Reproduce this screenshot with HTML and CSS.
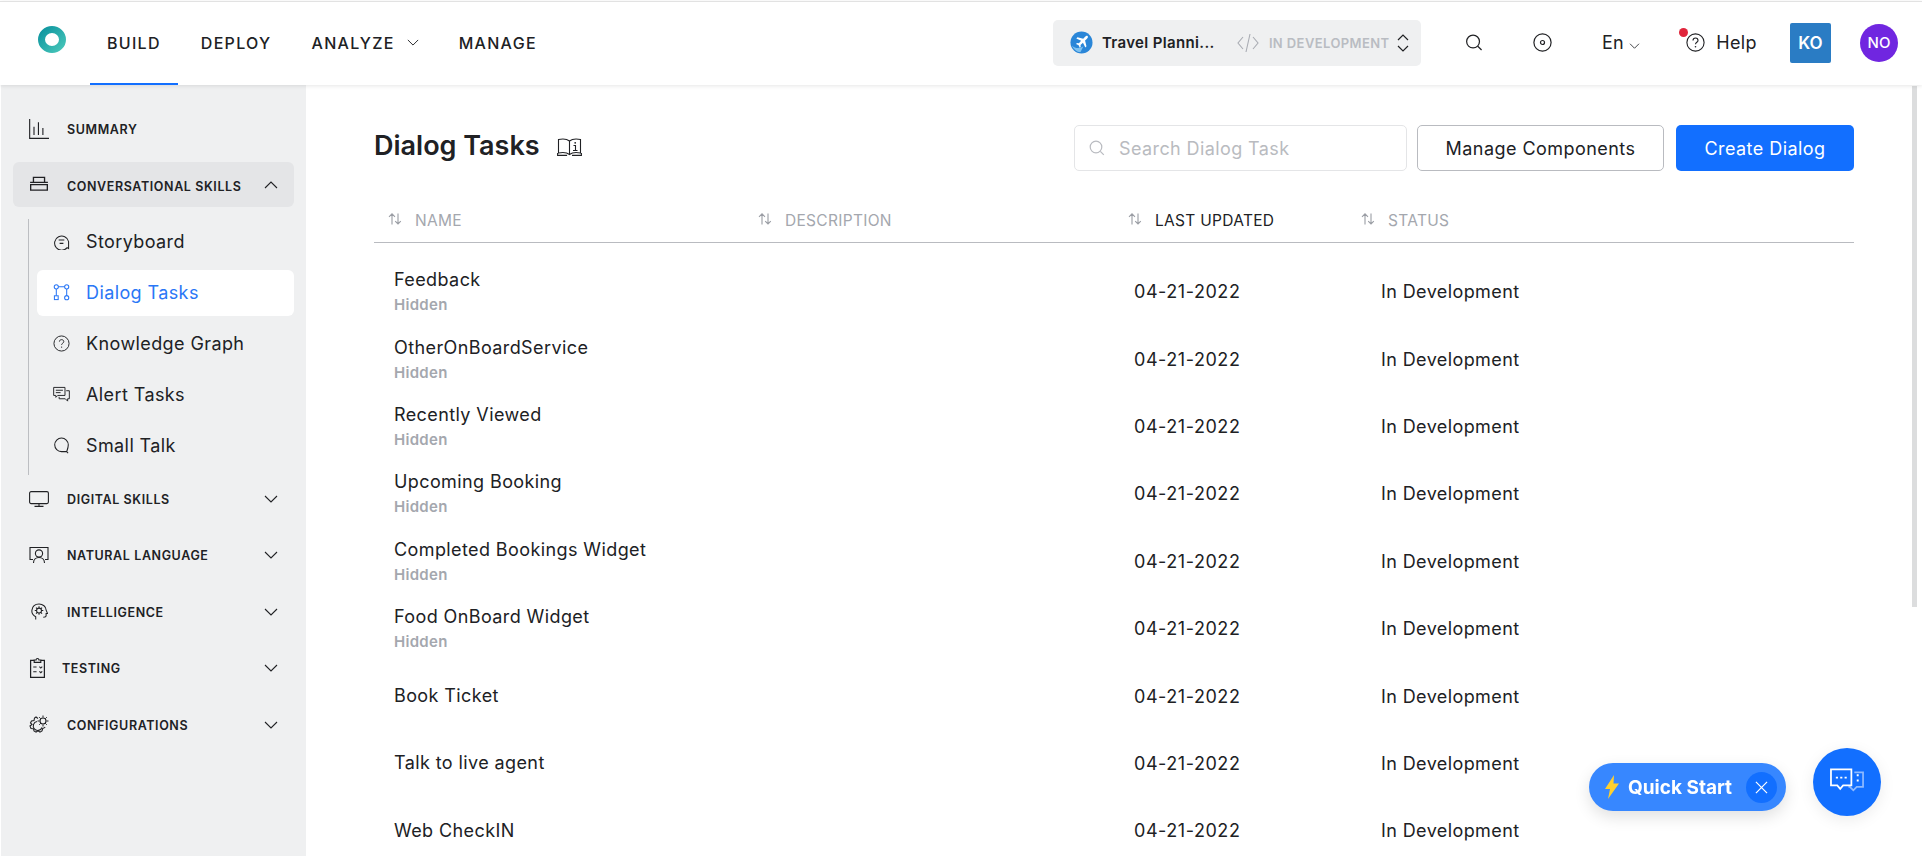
FILE: index.html
```html
<!DOCTYPE html>
<html lang="en">
<head>
    <meta charset="UTF-8">
    <meta name="viewport" content="width=device-width, initial-scale=1.0">
    <title>Dialog Tasks</title>
    <link rel="stylesheet" href="styles.css">
</head>
<body>
    <svg class="defs" aria-hidden="true">
        <symbol id="chev" viewBox="0 0 14 8"><path d="M1 1l6 6 6-6" fill="none" stroke="currentColor" stroke-width="1.1"/></symbol>
        <symbol id="sort" viewBox="0 0 14 12"><path d="M4 11.500V1M1 3.800L4 .8l3 3M10 .5V11M7.200 8.200l2.800 2.800 2.800-2.800" fill="none" stroke="currentColor" stroke-width="1.100"/></symbol>
    </svg>

    <header class="topbar">
        <svg class="logo" viewBox="0 0 28 27">
            <defs><linearGradient id="ring" x1="0" y1="0" x2="1" y2="1"><stop offset="0" stop-color="#0f96a0"/><stop offset="1" stop-color="#45c4b8"/></linearGradient></defs>
            <ellipse cx="14" cy="13.500" rx="10.500" ry="10" fill="none" stroke="url(#ring)" stroke-width="7"/>
        </svg>
        <nav class="nav">
            <a class="nav-item active">BUILD</a>
            <a class="nav-item">DEPLOY</a>
            <a class="nav-item">ANALYZE <svg class="nav-chev"><use href="#chev"/></svg></a>
            <a class="nav-item">MANAGE</a>
        </nav>
        <div class="top-right">
            <div class="app-chip">
                <svg class="app-globe" viewBox="0 0 24 24">
                    <circle cx="12" cy="12" r="11.500" fill="#2a86d8"/>
                    <path d="M2 15c4 4 9 3 12 1l-3 6c-4 0-7-3-9-7z" fill="#7fc2f0"/>
                    <path d="M18.500 5.500c.8.800-.2 2-1 2.800l-1.800 1.700 1.500 6-1.200 1.200-2.500-5-2.500 2.300.2 2-1 1-1.200-2.700-2.700-1.200 1-1 2 .2 2.300-2.500-5-2.500 1.200-1.200 6 1.500 1.700-1.800c.8-.8 2-1.800 2.800-1z" fill="#fff"/>
                </svg>
                <span class="app-name">Travel Planni...</span>
                <svg class="app-code" viewBox="0 0 22 20"><path d="M6 4L1 10l5 6M16 4l5 6-5 6M13 1L9 19" fill="none" stroke="currentColor" stroke-width="1.100"/></svg>
                <span class="app-status">IN DEVELOPMENT</span>
                <svg class="app-updown" viewBox="0 0 12 18"><path d="M1 6l5-5 5 5M1 12l5 5 5-5" fill="none" stroke="#202124" stroke-width="1.200"/></svg>
            </div>
            <svg class="top-search" viewBox="0 0 18 18"><circle cx="8" cy="8" r="6.800" fill="none" stroke="currentColor" stroke-width="1.300"/><path d="M13 13l4 4" stroke="currentColor" stroke-width="1.300"/></svg>
            <svg class="top-target" viewBox="0 0 19 19"><circle cx="9.500" cy="9.500" r="8.600" fill="none" stroke="currentColor" stroke-width="1.200"/><circle cx="9.500" cy="9.500" r="2" fill="none" stroke="currentColor" stroke-width="1.200"/></svg>
            <span class="top-lang">En <svg class="lang-chev"><use href="#chev"/></svg></span>
            <span class="top-help">
                <i class="help-dot"></i>
                <svg class="help-icon" viewBox="0 0 19 19"><circle cx="9.500" cy="9.500" r="8.600" fill="none" stroke="currentColor" stroke-width="1.100"/><path d="M7 7.400c0-3.200 5-3.200 5 0 0 1.900-2.500 1.900-2.500 3.900" fill="none" stroke="currentColor" stroke-width="1.100"/><circle cx="9.500" cy="13.800" r=".8" fill="currentColor"/></svg>
                Help
            </span>
            <span class="badge-ko">KO</span>
            <span class="badge-no">NO</span>
        </div>
    </header>

    <div class="page">
        <aside class="sidebar">
            <a class="side-group first">
                <svg class="side-icon" viewBox="0 0 18 18"><path d="M.6 0v17.400H18M4.500 7v7.500M8.500 3v11.500M12.500 8v6.500" fill="none" stroke="currentColor" stroke-width="1"/></svg>
                <span class="side-label">SUMMARY</span>
            </a>
            <a class="side-group open">
                <svg class="side-icon" viewBox="0 0 18 14"><path d="M4 5V1h10v4M1.500 7.500h15v5h-15zM1 5.500h16" fill="none" stroke="currentColor" stroke-width="1.200"/></svg>
                <span class="side-label">CONVERSATIONAL SKILLS</span>
                <svg class="side-chev up"><use href="#chev"/></svg>
            </a>
            <div class="side-sub">
                <a class="sub-item">
                    <svg class="sub-icon" viewBox="0 0 18 18"><path d="M15 15.500A7.500 7.500 0 1 1 16.500 9v7.500z" fill="none" stroke="currentColor" stroke-width="1.100"/><path d="M6 7.500h6M7 11h4" stroke="currentColor" stroke-width="1.100"/></svg>
                    Storyboard
                </a>
                <a class="sub-item active">
                    <svg class="sub-icon" viewBox="0 0 18 18"><circle cx="3.500" cy="3" r="2.200" fill="none" stroke="currentColor" stroke-width="1.100"/><circle cx="14.500" cy="3" r="2.200" fill="none" stroke="currentColor" stroke-width="1.100"/><circle cx="14.500" cy="14.500" r="2.200" fill="none" stroke="currentColor" stroke-width="1.100"/><rect x="1.500" y="12.500" width="4" height="4" fill="none" stroke="currentColor" stroke-width="1.100"/><path d="M5.700 3h6.600M14.500 5.200v7M3.500 5.200v7.300" stroke="currentColor" stroke-width="1.100"/></svg>
                    Dialog Tasks
                </a>
                <a class="sub-item">
                    <svg class="sub-icon" viewBox="0 0 18 18"><circle cx="9" cy="9" r="8" fill="none" stroke="currentColor" stroke-width="1"/><path d="M6.800 7c0-2.800 4.600-2.800 4.600 0 0 1.700-2.300 1.700-2.300 3.400" fill="none" stroke="currentColor" stroke-width="1"/><circle cx="9.100" cy="12.800" r=".7" fill="currentColor"/></svg>
                    Knowledge Graph
                </a>
                <a class="sub-item">
                    <svg class="sub-icon" viewBox="0 0 18 18"><path d="M.7 1.500h12v8.500H5L3 12v-2H.7zM3 4.500h7.500M3 7h5" fill="none" stroke="currentColor" stroke-width="1"/><path d="M14 5h3.300v8.500h-1.800v2.500l-2.500-2.500H6.500v-2" fill="none" stroke="currentColor" stroke-width="1"/></svg>
                    Alert Tasks
                </a>
                <a class="sub-item">
                    <svg class="sub-icon" viewBox="0 0 18 18"><path d="M14.500 15.500H9A7.200 7.200 0 1 1 16.200 8.300c0 3-1 5.200-1.700 7.200zM14.500 15.500l1.500 1.500" fill="none" stroke="currentColor" stroke-width="1.100"/></svg>
                    Small Talk
                </a>
            </div>
            <a class="side-group">
                <svg class="side-icon" viewBox="0 0 20 16"><rect x=".6" y=".6" width="18.800" height="12" rx="1.500" fill="none" stroke="currentColor" stroke-width="1.100"/><path d="M10 13v2M5.500 15.400h9" stroke="currentColor" stroke-width="1.100"/></svg>
                <span class="side-label">DIGITAL SKILLS</span>
                <svg class="side-chev"><use href="#chev"/></svg>
            </a>
            <a class="side-group">
                <svg class="side-icon" viewBox="0 0 20 17"><path d="M4 13H1V1h18v12h-3" fill="none" stroke="currentColor" stroke-width="1.100"/><circle cx="10" cy="7" r="3.600" fill="none" stroke="currentColor" stroke-width="1.100"/><path d="M4.500 16.500c0-3.500 2.500-5.500 5.500-5.500s5.500 2 5.500 5.500" fill="none" stroke="currentColor" stroke-width="1.100"/></svg>
                <span class="side-label">NATURAL LANGUAGE</span>
                <svg class="side-chev"><use href="#chev"/></svg>
            </a>
            <a class="side-group narrow">
                <svg class="side-icon" viewBox="1 0 18 18"><path d="M6 17v-3c-3-1.500-4.500-4-4-7 .5-4 3.500-6.500 7.500-6.500s7.500 2.800 7.500 6.500l1.500 3.500H17v2.500c0 1-1 1.500-3 1.500" fill="none" stroke="currentColor" stroke-width="1.100"/><circle cx="9.500" cy="7.500" r="2.600" fill="none" stroke="currentColor" stroke-width="1.100"/><path d="M9.500 3v2M9.500 10v2M5 7.500h2M12 7.500h2M6.300 4.300l1.400 1.400M11.300 9.300l1.400 1.400M12.700 4.300l-1.400 1.400M7.700 9.300l-1.400 1.400" stroke="currentColor" stroke-width="1.100"/></svg>
                <span class="side-label">INTELLIGENCE</span>
                <svg class="side-chev"><use href="#chev"/></svg>
            </a>
            <a class="side-group testing">
                <svg class="side-icon" viewBox="0 0 18 22"><path d="M5.500 3H1.700v18h14.600V3h-3.800" fill="none" stroke="currentColor" stroke-width="1.300"/><path d="M5.500 5V2.500h2a1.500 1.500 0 0 1 3 0h2V5z" fill="none" stroke="currentColor" stroke-width="1.200"/><path d="M4.500 10h3.500M4.500 15h3.500M11 9.500l1.500 1.500 1.500-1.500M11 14.500l1.500 1.500 1.500-1.500" fill="none" stroke="currentColor" stroke-width="1.100"/></svg>
                <span class="side-label">TESTING</span>
                <svg class="side-chev"><use href="#chev"/></svg>
            </a>
            <a class="side-group">
                <svg class="side-icon" viewBox="0 0 20 20"><path d="M9 3.500L7 2 5.500 3 5 5.500 2.500 6 1.500 8 3 9.500 1 11l1 2.500 2.500.2.500 2.300 2 1.200 2-1.500 2 1.500 2-1.200.7-2.500c1-.3 1.800-.7 2.500-1.500" fill="none" stroke="currentColor" stroke-width="1.100"/><path d="M8 6.500a4.500 4.500 0 1 0 5 6" fill="none" stroke="currentColor" stroke-width="1.100"/><circle cx="14" cy="6" r="3" fill="none" stroke="currentColor" stroke-width="1.100"/><path d="M14 .5v2M14 9.500v2M8.500 6h2M17.500 6h2M10.200 2.200l1.500 1.500M16.300 8.300l1.500 1.500M17.800 2.200l-1.500 1.500M11.700 8.300l-1.500 1.500" stroke="currentColor" stroke-width="1"/></svg>
                <span class="side-label">CONFIGURATIONS</span>
                <svg class="side-chev"><use href="#chev"/></svg>
            </a>
        </aside>

        <main class="content">
            <div class="content-head">
                <h1 class="title">Dialog Tasks</h1>
                <svg class="title-icon" viewBox="0 0 25 18"><path d="M12.500 3C10 1 5 .8 1.500 1.500V15c3.500-.7 8.500-.5 11 1.500 2.500-2 7.500-2.200 11-1.500V1.500C20 .8 15 1 12.500 3zM12.500 3v13.500" fill="none" stroke="#202124" stroke-width="1.100"/><path d="M.6 15v2.400h9.500M24.400 15v2.400H15" fill="none" stroke="#202124" stroke-width="1.100"/><path d="M16.500 7.500h2v5M16 12.500h4.500" fill="none" stroke="#202124" stroke-width="1.100"/><circle cx="18.200" cy="4.800" r=".9" fill="#202124"/></svg>
                <div class="search-box">
                    <svg class="search-icon" viewBox="0 0 16 16"><circle cx="7" cy="7" r="5.800" fill="none" stroke="currentColor" stroke-width="1.200"/><path d="M11.300 11.300l3.500 3.500" stroke="currentColor" stroke-width="1.200"/></svg>
                    <span>Search Dialog Task</span>
                </div>
                <button class="btn btn-outline">Manage Components</button>
                <button class="btn btn-primary">Create Dialog</button>
            </div>

            <div class="table-row table-head">
                <div class="th"><svg class="sort-icon"><use href="#sort"/></svg>NAME</div>
                <div class="th"><svg class="sort-icon"><use href="#sort"/></svg>DESCRIPTION</div>
                <div class="th dark"><svg class="sort-icon"><use href="#sort"/></svg>LAST UPDATED</div>
                <div class="th"><svg class="sort-icon"><use href="#sort"/></svg>STATUS</div>
            </div>

            <div class="table-body">
                <div class="table-row"><div class="cell-name">Feedback<small>Hidden</small></div><div></div><div class="cell-date">04-21-2022</div><div class="cell-status">In Development</div></div>
                <div class="table-row"><div class="cell-name">OtherOnBoardService<small>Hidden</small></div><div></div><div class="cell-date">04-21-2022</div><div class="cell-status">In Development</div></div>
                <div class="table-row"><div class="cell-name">Recently Viewed<small>Hidden</small></div><div></div><div class="cell-date">04-21-2022</div><div class="cell-status">In Development</div></div>
                <div class="table-row"><div class="cell-name">Upcoming Booking<small>Hidden</small></div><div></div><div class="cell-date">04-21-2022</div><div class="cell-status">In Development</div></div>
                <div class="table-row"><div class="cell-name">Completed Bookings Widget<small>Hidden</small></div><div></div><div class="cell-date">04-21-2022</div><div class="cell-status">In Development</div></div>
                <div class="table-row"><div class="cell-name">Food OnBoard Widget<small>Hidden</small></div><div></div><div class="cell-date">04-21-2022</div><div class="cell-status">In Development</div></div>
                <div class="table-row"><div class="cell-name">Book Ticket</div><div></div><div class="cell-date">04-21-2022</div><div class="cell-status">In Development</div></div>
                <div class="table-row"><div class="cell-name">Talk to live agent</div><div></div><div class="cell-date">04-21-2022</div><div class="cell-status">In Development</div></div>
                <div class="table-row"><div class="cell-name">Web CheckIN</div><div></div><div class="cell-date">04-21-2022</div><div class="cell-status">In Development</div></div>
            </div>
            <div class="scroll-thumb"></div>
        </main>
    </div>

    <div class="quick-start">
        <svg class="bolt" viewBox="0 0 14 24"><path d="M9 0L0 14h5l-2 10L14 8.500H8.500z" fill="#ffd02e"/></svg>
        <span>Quick Start</span>
        <span class="qs-close"><svg viewBox="0 0 14 14"><path d="M1 1l12 12M13 1L1 13" stroke="#fff" stroke-width="1.300"/></svg></span>
    </div>
    <div class="chat-fab">
        <svg viewBox="0 0 36 28">
            <path d="M25 4h9v15h-6.500l-3.500 3.500-3.500-3.500H19" fill="none" stroke="#8db9ff" stroke-width="1.800"/>
            <path d="M1 1h21v16.500h-8.500L10.500 21l-3-3.500H1z" fill="#126fff" stroke="#fff" stroke-width="1.800"/>
            <path d="M6 9.500h2.200M10.500 9.500h2.200M15 9.500h2.200" stroke="#fff" stroke-width="2"/>
            <path d="M27.500 7h2M27.500 12.500h2" stroke="#fff" stroke-width="2"/>
        </svg>
    </div>
</body>
</html>
```

FILE: styles.css
```css
* {
    box-sizing: border-box;
}

html, body {
    height: 100%;
}

body {
    margin: 0;
    padding-top: 1px;
    font-family: Inter, "Liberation Sans", sans-serif;
    color: #202124;
    background-color: #fff;
    overflow: hidden;
}

.defs {
    display: none;
}

/* top bar */
.topbar {
    display: flex;
    align-items: center;
    height: 84px;
    border-top: 1px solid #e2e2e2;
    padding-left: 38px;
    box-shadow: 0 1px 4px rgba(0, 0, 0, 0.1);
    position: relative;
    z-index: 2;
    background-color: #fff;
}

.logo {
    width: 28px;
    height: 27px;
    margin-bottom: 8px;
}

.nav {
    display: flex;
    align-self: stretch;
    gap: 6px;
    margin-left: 24px;
}

.nav-item {
    display: flex;
    align-items: center;
    gap: 12px;
    padding: 0 17px;
    font-size: 16px;
    font-weight: 500;
    letter-spacing: 1.3px;
    border-bottom: 2px solid transparent;
}

.nav-item.active {
    border-bottom-color: #126fff;
}

.nav-chev {
    width: 12px;
    height: 7px;
}

.top-right {
    display: flex;
    align-items: center;
    margin-left: auto;
    margin-bottom: 2px;
    padding-right: 24px;
    font-size: 18px;
    letter-spacing: 0.4px;
}

.app-chip {
    display: flex;
    align-items: center;
    width: 368px;
    height: 46px;
    padding-left: 17px;
    border-radius: 5px;
    background-color: #eff0f1;
}

.app-globe {
    width: 23px;
    height: 23px;
}

.app-name {
    margin-left: 9px;
    width: 135px;
    font-size: 15px;
    font-weight: 600;
    letter-spacing: 0.35px;
}

.app-code {
    width: 22px;
    height: 20px;
    color: #a9acb3;
}

.app-status {
    margin-left: 10px;
    width: 128px;
    font-size: 13px;
    font-weight: 600;
    letter-spacing: 0.4px;
    color: #b9bcc2;
}

.app-updown {
    width: 12px;
    height: 18px;
}

.top-search {
    width: 18px;
    height: 17px;
    margin-left: 44px;
}

.top-target {
    width: 19px;
    height: 19px;
    margin-left: 50px;
}

.top-lang {
    display: flex;
    align-items: center;
    gap: 5px;
    margin-left: 50px;
}

.lang-chev {
    width: 11px;
    height: 6px;
    margin-top: 6px;
}

.top-help {
    display: flex;
    align-items: center;
    gap: 11px;
    margin-left: 46px;
    position: relative;
}

.help-icon {
    width: 19px;
    height: 19px;
}

.help-dot {
    position: absolute;
    left: -7px;
    top: -4px;
    width: 9px;
    height: 9px;
    border-radius: 50%;
    background-color: #e0263c;
}

.badge-ko {
    display: flex;
    align-items: center;
    justify-content: center;
    width: 41px;
    height: 40px;
    margin-left: 33px;
    border-radius: 2px;
    background-color: #2a7cc4;
    color: #fff;
    font-size: 17px;
    font-weight: 600;
    letter-spacing: 0;
}

.badge-no {
    display: flex;
    align-items: center;
    justify-content: center;
    width: 38px;
    height: 38px;
    margin-left: 29px;
    border-radius: 50%;
    background-color: #7026e0;
    color: #fff;
    font-size: 15px;
    font-weight: 500;
    letter-spacing: 0;
}

/* sidebar */
.page {
    display: flex;
    height: 771px;
}

.sidebar {
    flex: none;
    width: 305px;
    margin-left: 1px;
    padding: 22px 12px 0 12px;
    background-color: #eff0f1;
}

.side-group {
    display: flex;
    align-items: center;
    height: 44.5px;
    margin-bottom: 12px;
    padding: 0 16px;
    border-radius: 6px;
}

.side-group.first {
    margin-bottom: 10.5px;
}

.side-group.open {
    margin-bottom: 12px;
    background-color: #e4e5e7;
}

.side-group.open .side-label {
    margin-top: 5px;
}

.side-group.open .side-chev {
    margin-top: 1px;
}

.side-icon {
    flex: none;
    width: 20px;
    height: 20px;
    margin-right: 18px;
}

.side-group.testing .side-icon {
    width: 17px;
    height: 22px;
    margin-right: 16px;
}

.side-group.narrow .side-icon {
    width: 17px;
    height: 18px;
    margin-left: 2px;
    margin-right: 19px;
}

.side-label {
    font-size: 12.500px;
    font-weight: 600;
    letter-spacing: 0.6px;
    margin-top: 1px;
}

.side-chev {
    width: 14px;
    height: 8px;
    margin-left: auto;
}

.side-chev.up {
    transform: rotate(180deg);
}

.side-sub {
    display: flex;
    flex-direction: column;
    gap: 5px;
    margin-left: 15px;
    margin-bottom: 2px;
    padding-bottom: 6px;
    padding-left: 8px;
    border-left: 1px solid #bcbec2;
}

.sub-item {
    display: flex;
    align-items: center;
    gap: 16px;
    height: 46px;
    padding-left: 16px;
    border-radius: 6px;
    font-size: 18px;
    letter-spacing: 0.4px;
}

.sub-item.active {
    background-color: #fff;
    color: #2a77f6;
}

.sub-icon {
    flex: none;
    width: 17px;
    height: 17px;
}

/* main table */
.content {
    position: relative;
    flex: 1;
    padding: 40px 68px 0;
    overflow: hidden;
}

.content-head {
    display: flex;
    align-items: center;
    height: 46px;
}

.title {
    margin: 0 0 5px;
    font-size: 27px;
    font-weight: 600;
}

.title-icon {
    width: 25px;
    height: 18px;
    margin-left: 17px;
    margin-bottom: 3px;
}

.search-box {
    display: flex;
    align-items: center;
    gap: 14px;
    width: 333px;
    height: 46px;
    margin-left: auto;
    padding-left: 14px;
    border: 1px solid #e4e5e7;
    border-radius: 5px;
    color: #b9bbc0;
    font-size: 18px;
    letter-spacing: 0.4px;
}

.search-icon {
    width: 16px;
    height: 16px;
}

.btn {
    height: 46px;
    border-radius: 5px;
    font-family: inherit;
    font-size: 18px;
    letter-spacing: 0.45px;
}

.btn-outline {
    width: 247px;
    margin-left: 10px;
    border: 1px solid #b9bbc0;
    background-color: #fff;
    color: #202124;
}

.btn-primary {
    width: 178px;
    margin-left: 12px;
    border: none;
    background-color: #126fff;
    color: #fff;
}

.table-row {
    display: grid;
    grid-template-columns: 370px 370px 233px 1fr;
    align-items: center;
    height: 67.4px;
    font-size: 18px;
    letter-spacing: 0.4px;
}

.table-head {
    height: 46px;
    margin-top: 26px;
    border-bottom: 1px solid #b9bbc0;
    font-size: 15.500px;
    letter-spacing: 0.3px;
    color: #a4a7ae;
}

.th {
    display: flex;
    align-items: center;
    gap: 13px;
    padding-left: 14px;
    padding-top: 2px;
}

.th.dark {
    color: #202124;
}

.sort-icon {
    width: 14px;
    height: 12px;
    margin-top: -3px;
    color: #9a9da4;
}

.table-body {
    padding-top: 15px;
}

.cell-name {
    padding-left: 20px;
    line-height: 22px;
}

.cell-name small {
    display: block;
    margin-top: 4px;
    font-size: 15px;
    line-height: 19px;
    font-weight: 600;
    letter-spacing: 0.3px;
    color: #a4a7ae;
}

.cell-date {
    padding-left: 20px;
    letter-spacing: 0.55px;
}

.cell-status {
    padding-left: 34px;
}

.scroll-thumb {
    position: absolute;
    top: 1px;
    right: 5px;
    width: 5px;
    height: 521px;
    background-color: #dcddde;
}

/* floating buttons */
.quick-start {
    position: fixed;
    left: 1589px;
    top: 763px;
    display: flex;
    align-items: center;
    width: 197px;
    height: 48px;
    padding-left: 16px;
    border-radius: 24px;
    background-color: #3787ff;
    color: #fff;
    font-size: 19px;
    font-weight: 700;
    box-shadow: 0 6px 16px rgba(0, 0, 0, 0.12);
}

.bolt {
    width: 14px;
    height: 24px;
    margin-right: 9px;
}

.qs-close {
    display: flex;
    align-items: center;
    justify-content: center;
    width: 31px;
    height: 31px;
    margin-left: auto;
    margin-right: 9px;
    border-radius: 50%;
    background-color: #126fff;
}

.qs-close svg {
    width: 13px;
    height: 13px;
}

.chat-fab {
    position: fixed;
    left: 1813px;
    top: 748px;
    display: flex;
    align-items: center;
    justify-content: center;
    width: 68px;
    height: 68px;
    border-radius: 50%;
    background-color: #126fff;
    box-shadow: 0 4px 16px rgba(0, 0, 0, 0.08);
}

.chat-fab svg {
    width: 35px;
    height: 28px;
}
```
